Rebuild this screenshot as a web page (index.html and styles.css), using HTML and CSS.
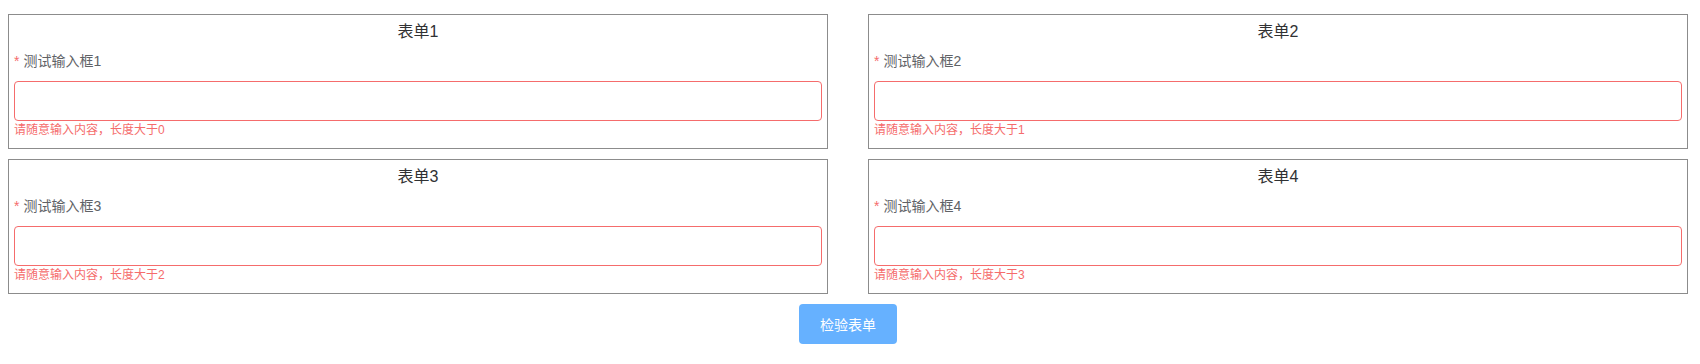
FILE: index.html
```html
<!DOCTYPE html>
<html lang="zh-CN">
<head>
<meta charset="UTF-8">
<title>表单校验</title>
<link rel="stylesheet" href="styles.css">
</head>
<body>

<div class="page">
  <div class="form-grid">
    <div class="form-box">
      <div class="form-title">表单1</div>
      <label class="form-label"><span class="required">*</span>测试输入框1</label>
      <input class="form-input" type="text">
      <div class="form-error">请随意输入内容，长度大于0</div>
    </div>
    <div class="form-box">
      <div class="form-title">表单2</div>
      <label class="form-label"><span class="required">*</span>测试输入框2</label>
      <input class="form-input" type="text">
      <div class="form-error">请随意输入内容，长度大于1</div>
    </div>
    <div class="form-box">
      <div class="form-title">表单3</div>
      <label class="form-label"><span class="required">*</span>测试输入框3</label>
      <input class="form-input" type="text">
      <div class="form-error">请随意输入内容，长度大于2</div>
    </div>
    <div class="form-box">
      <div class="form-title">表单4</div>
      <label class="form-label"><span class="required">*</span>测试输入框4</label>
      <input class="form-input" type="text">
      <div class="form-error">请随意输入内容，长度大于3</div>
    </div>
  </div>

  <div class="actions">
    <button class="btn-check" type="button">检验表单</button>
  </div>
</div>

</body>
</html>
```

FILE: styles.css
```css
body {
  margin: 0;
  padding: 0;
  font-family: "Liberation Sans", "Noto Sans CJK SC", sans-serif;
  background: #fff;
}

.page {
  width: 1680px;
  padding: 14px 0 0 8px;
}

.form-grid {
  display: grid;
  grid-template-columns: 820px 820px;
  gap: 10px 40px;
}

.form-box {
  display: flex;
  flex-direction: column;
  border: 1px solid #8c8c8c;
  padding: 0 5px 9px;
}

.form-title {
  text-align: center;
  font-size: 16px;
  line-height: 34px;
  color: #303133;
}

.form-label {
  margin-top: 2px;
  margin-bottom: 10px;
  font-size: 14px;
  line-height: 20px;
  color: #606266;
}

.required {
  color: #f56c6c;
  margin-right: 4px;
}

.form-input {
  box-sizing: border-box;
  width: 100%;
  height: 40px;
  margin: 0;
  padding: 0 15px;
  border: 1px solid #f56c6c;
  border-radius: 4px;
  outline: none;
  font-size: 14px;
}

.form-error {
  font-size: 12px;
  line-height: 18px;
  color: #f56c6c;
}

.actions {
  display: flex;
  justify-content: center;
  margin-top: 10px;
}

.btn-check {
  width: 98px;
  height: 40px;
  border: none;
  border-radius: 4px;
  background-color: #66b1ff;
  color: #fff;
  font-size: 14px;
  font-family: inherit;
  cursor: pointer;
}
```
